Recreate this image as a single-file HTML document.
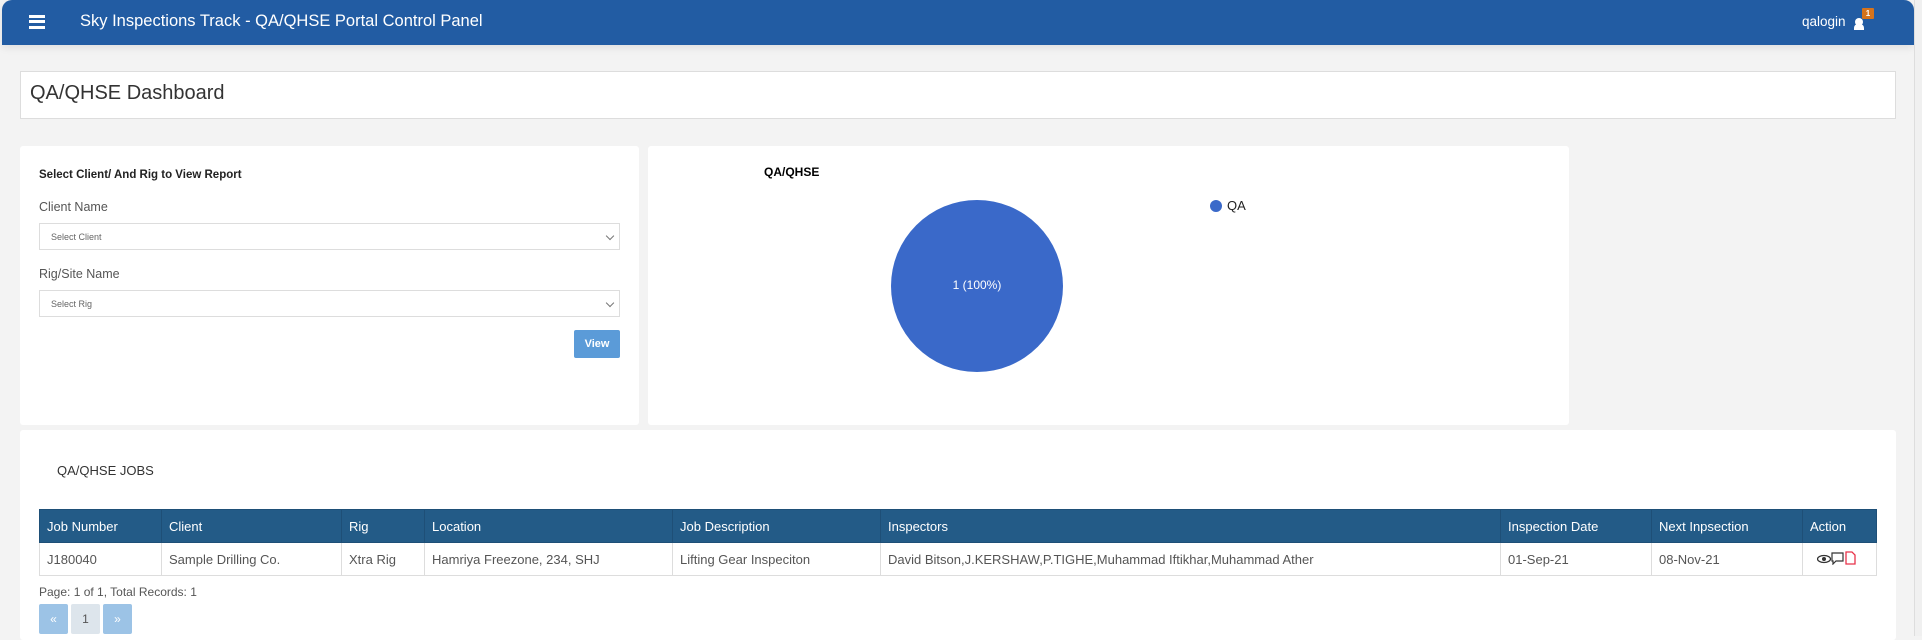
<!DOCTYPE html>
<html><head><meta charset="utf-8"><style>
*{box-sizing:border-box;margin:0;padding:0}
body{width:1922px;height:636px;overflow:hidden;background:#f3f3f3;font-family:"Liberation Sans",sans-serif;position:relative;color:#333}
.abs{position:absolute}
.hdr{left:2px;top:0;width:1912px;height:45px;background:#225ca3;border-radius:10px 10px 0 0;box-shadow:0 3px 8px rgba(0,0,0,.08)}
.scroll{left:1914px;top:0;width:8px;height:636px;background:#f0f0f0;border-left:1px solid #ddd}
.panel{background:#fff;border-radius:3px}
table{border-collapse:collapse;font-size:13px}
td,th{border:1px solid #ddd;text-align:left;font-weight:normal;padding:0 7px;white-space:nowrap}
th{background:#235b87;color:#fff;height:33px;border-color:#1e4f77}
td{height:33px;color:#555}
.sel{border:1px solid #ddd;height:27px;font-size:9px;color:#666;padding:8px 11px;background:#fff}
.chev{position:absolute;right:6px;top:9px;width:6px;height:6px;border-right:1.5px solid #777;border-bottom:1.5px solid #777;transform:rotate(45deg)}
.pg{top:604px;width:30px;height:30px;font-size:12px;text-align:center;line-height:30px;border-radius:2px}
</style></head><body>
<div class="abs hdr"></div>
<div class="abs" style="left:29px;top:15px;width:16px;height:3px;background:#fff"></div>
<div class="abs" style="left:29px;top:20px;width:16px;height:3px;background:#fff"></div>
<div class="abs" style="left:29px;top:26px;width:16px;height:3px;background:#fff"></div>
<div class="abs" style="left:80px;top:12px;color:#fff;font-size:16.5px">Sky Inspections Track - QA/QHSE Portal Control Panel</div>
<div class="abs" style="left:1802px;top:14px;color:#fff;font-size:13.5px">qalogin</div>
<div class="abs" style="left:1855px;top:18px;width:8px;height:8px;border-radius:50%;background:#fff"></div>
<div class="abs" style="left:1854px;top:24px;width:10px;height:6px;border-radius:4px 4px 0 0;background:#fff"></div>
<div class="abs" style="left:1862px;top:8px;width:12px;height:11px;background:#d5731c;color:#fff;font-size:8px;font-weight:bold;text-align:center;line-height:11px;border-radius:1px">1</div>
<div class="abs scroll"></div>

<div class="abs panel" style="left:20px;top:71px;width:1876px;height:48px;border:1px solid #ddd;border-radius:0"></div>
<div class="abs" style="left:30px;top:82px;font-size:20px;color:#333">QA/QHSE Dashboard</div>

<div class="abs panel" style="left:20px;top:146px;width:619px;height:279px"></div>
<div class="abs" style="left:39px;top:169px;font-size:11.5px;font-weight:bold;color:#222">Select Client/ And Rig to View Report</div>
<div class="abs" style="left:39px;top:200px;font-size:12.5px;color:#555">Client Name</div>
<div class="abs sel" style="left:39px;top:223px;width:581px">Select Client<span class="chev"></span></div>
<div class="abs" style="left:39px;top:267px;font-size:12.5px;color:#555">Rig/Site Name</div>
<div class="abs sel" style="left:39px;top:290px;width:581px">Select Rig<span class="chev"></span></div>
<div class="abs" style="left:574px;top:330px;width:46px;height:28px;background:#5b9bd8;border-radius:2px;color:#fff;font-size:11px;font-weight:bold;text-align:center;line-height:28px">View</div>

<div class="abs panel" style="left:648px;top:146px;width:921px;height:279px"></div>
<div class="abs" style="left:764px;top:165px;font-size:12px;font-weight:bold;color:#000">QA/QHSE</div>
<div class="abs" style="left:891px;top:200px;width:172px;height:172px;border-radius:50%;background:#3a69c9"></div>
<div class="abs" style="left:891px;top:278px;width:172px;text-align:center;color:#fff;font-size:12px">1 (100%)</div>
<div class="abs" style="left:1210px;top:200px;width:12px;height:12px;border-radius:50%;background:#3a69c9"></div>
<div class="abs" style="left:1227px;top:198px;font-size:13px;color:#222">QA</div>

<div class="abs panel" style="left:20px;top:430px;width:1876px;height:210px"></div>
<div class="abs" style="left:57px;top:463px;font-size:13px;color:#333">QA/QHSE JOBS</div>
<table class="abs" style="left:39px;top:509px;width:1838px">
<tr><th style="width:122px">Job Number</th><th style="width:180px">Client</th><th style="width:83px">Rig</th><th style="width:248px">Location</th><th style="width:208px">Job Description</th><th style="width:620px">Inspectors</th><th style="width:151px">Inspection Date</th><th style="width:151px">Next Inpsection</th><th>Action</th></tr>
<tr><td>J180040</td><td>Sample Drilling Co.</td><td>Xtra Rig</td><td>Hamriya Freezone, 234, SHJ</td><td>Lifting Gear Inspeciton</td><td>David Bitson,J.KERSHAW,P.TIGHE,Muhammad Iftikhar,Muhammad Ather</td><td>01-Sep-21</td><td>08-Nov-21</td><td style="padding-left:14px"><svg width="46" height="14" viewBox="0 0 46 14"><ellipse cx="7" cy="8" rx="6.5" ry="3.5" fill="none" stroke="#333" stroke-width="1.3"/><circle cx="7" cy="8" r="2" fill="#333"/><path d="M15 2h11v8h-7l-3 3v-3h-1z" fill="none" stroke="#333" stroke-width="1.2"/><path d="M29 1h6l3 3v9h-9z" fill="none" stroke="#e8334a" stroke-width="1.3"/></svg></td></tr>
</table>
<div class="abs" style="left:39px;top:585px;font-size:12px;color:#555">Page: 1 of 1, Total Records: 1</div>
<div class="abs pg" style="left:39px;background:#9cc3e6;color:#fff;width:29px">«</div>
<div class="abs pg" style="left:71px;background:#dde5ec;color:#555;width:29px">1</div>
<div class="abs pg" style="left:103px;background:#9cc3e6;color:#fff;width:29px">»</div>
</body></html>
